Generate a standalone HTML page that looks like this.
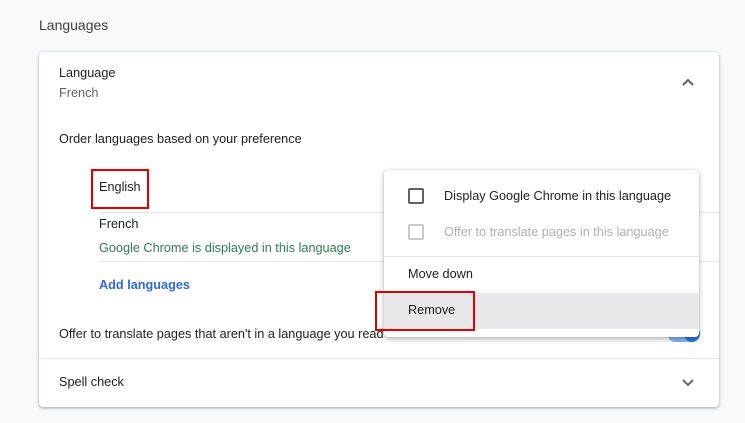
<!DOCTYPE html>
<html><head><style>
body{margin:0;width:745px;height:423px;background:#f8f9fa;font-family:"Liberation Sans",sans-serif;position:relative;overflow:hidden;color:#202124}
.a{position:absolute;white-space:nowrap}
.card{position:absolute;left:39px;top:52px;width:680px;height:355px;background:#fff;border-radius:4px;box-shadow:0 1px 2px rgba(60,64,67,.3),0 1px 3px 1px rgba(60,64,67,.15)}
.t{font-size:12.7px}
.menu{position:absolute;left:384px;top:170px;width:315px;height:167px;background:#fff;border-radius:4px;box-shadow:0 2px 6px rgba(0,0,0,.3),0 0 1px rgba(0,0,0,.2)}
.cb{position:absolute;width:12px;height:12px;border:2px solid #5f6368;border-radius:2px}
</style></head><body>
<div class="a" style="left:39px;top:17px;font-size:14px;color:#3c4043">Languages</div>
<div class="card"></div>
<div class="a t" style="left:59px;top:66px">Language</div>
<div class="a t" style="left:59px;top:86px;color:#5f6368">French</div>
<svg class="a" style="left:682px;top:78px" width="12" height="8"><path d="M1 7L6 2L11 7" stroke="#5f6368" stroke-width="2" fill="none"/></svg>
<div class="a t" style="left:59px;top:132px">Order languages based on your preference</div>
<div class="a t" style="left:99px;top:180px">English</div>
<div class="a" style="left:91px;top:169px;width:54px;height:36px;border:2px solid #e00000"></div>
<div class="a" style="left:99px;top:212px;width:620px;height:1px;background:#e5e5e5"></div>
<div class="a t" style="left:99px;top:217px">French</div>
<div class="a t" style="left:99px;top:241px;color:#2e7d4f">Google Chrome is displayed in this language</div>
<div class="a" style="left:99px;top:261px;width:620px;height:1px;background:#e5e5e5"></div>
<div class="a t" style="left:99px;top:278px;color:#3367d6;font-weight:bold">Add languages</div>
<div class="a t" style="left:59px;top:327px">Offer to translate pages that aren't in a language you read</div>
<div class="a" style="left:668px;top:328px;width:30px;height:14px;border-radius:7px;background:#8ab4f8"></div>
<div class="a" style="left:684px;top:326px;width:16px;height:16px;border-radius:8px;background:#3574e3"></div>
<div class="a" style="left:39px;top:358px;width:680px;height:1px;background:#e5e5e5"></div>
<div class="a t" style="left:59px;top:375px">Spell check</div>
<svg class="a" style="left:682px;top:379px" width="12" height="8"><path d="M1 1L6 6L11 1" stroke="#5f6368" stroke-width="2" fill="none"/></svg>
<div class="menu">
<div class="cb" style="left:24px;top:18px"></div>
<div class="a t" style="left:60px;top:19px">Display Google Chrome in this language</div>
<div class="cb" style="left:24px;top:54px;border-color:#c8c8c8"></div>
<div class="a t" style="left:60px;top:55px;color:#b0b0b0">Offer to translate pages in this language</div>
<div class="a" style="left:0;top:86px;width:315px;height:1px;background:#e5e5e5"></div>
<div class="a t" style="left:24px;top:97px">Move down</div>
<div class="a" style="left:0;top:123px;width:315px;height:36px;background:#e8e8ea"></div>
<div class="a t" style="left:24px;top:133px">Remove</div>
</div>
<div class="a" style="left:375px;top:291px;width:96px;height:36px;border:2px solid #e00000"></div>
</body></html>
